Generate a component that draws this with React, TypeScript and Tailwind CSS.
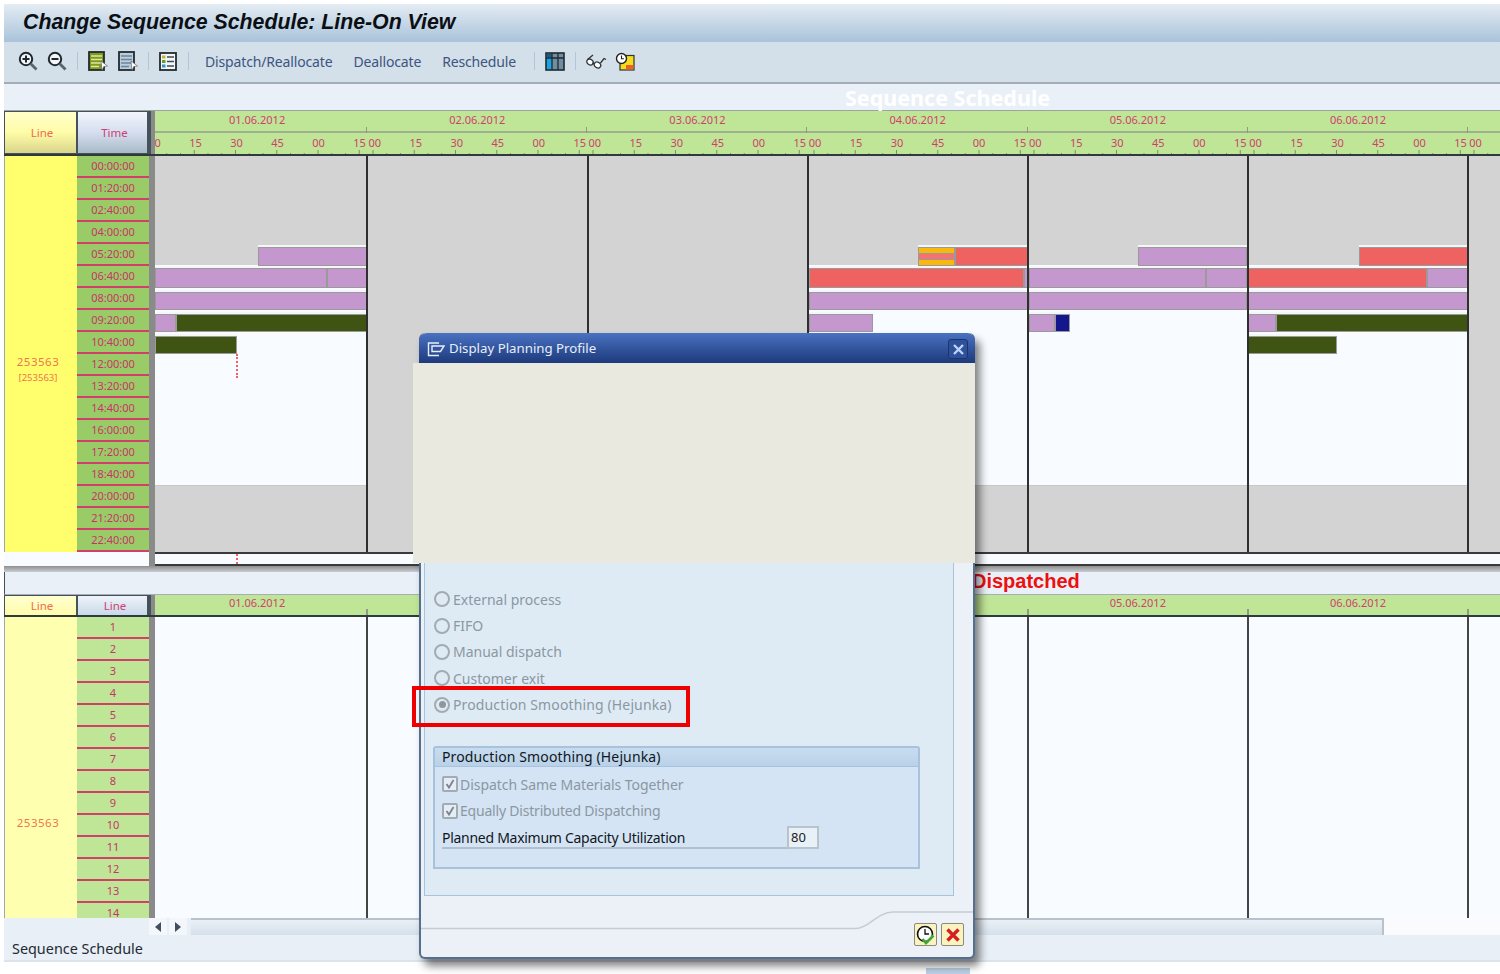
import React from 'react';

const uiFont = { fontFamily: '"Noto Sans", "Open Sans", sans-serif' };

const times = ['00:00:00','01:20:00','02:40:00','04:00:00','05:20:00','06:40:00','08:00:00','09:20:00','10:40:00','12:00:00','13:20:00','14:40:00','16:00:00','17:20:00','18:40:00','20:00:00','21:20:00','22:40:00'];
const days = ['01.06.2012','02.06.2012','03.06.2012','04.06.2012','05.06.2012','06.06.2012'];
const dayLines = [367, 588, 808, 1028, 1248, 1468];
const ticks = ['00','15','30','45','00','15'];

const PURPLE = '#c497cf';
const RED = '#ef6262';
const MOSS = '#3f5413';
const NAVY = '#14168e';

type Bar = { x1: number; x2: number; y: number; h: number; color: string };

const bar = (x1: number, x2: number, row: number, color: string): Bar => {
  const rows = [[247, 19], [268, 20], [292, 18], [314, 18], [336, 18]];
  return { x1, x2, y: rows[row][0], h: rows[row][1], color };
};

const bars: Bar[] = [
  bar(258, 367, 0, PURPLE), bar(955, 1028, 0, RED), bar(1138, 1247, 0, PURPLE), bar(1359, 1468, 0, RED),
  bar(155, 327, 1, PURPLE), bar(327, 367, 1, PURPLE), bar(809, 1024, 1, RED), bar(1024, 1028, 1, PURPLE),
  bar(1029, 1206, 1, PURPLE), bar(1206, 1247, 1, PURPLE), bar(1248, 1427, 1, RED), bar(1427, 1468, 1, PURPLE),
  bar(155, 367, 2, PURPLE), bar(809, 1028, 2, PURPLE), bar(1029, 1247, 2, PURPLE), bar(1248, 1468, 2, PURPLE),
  bar(155, 176, 3, PURPLE), bar(176, 367, 3, MOSS), bar(809, 873, 3, PURPLE), bar(1029, 1055, 3, PURPLE),
  bar(1055, 1070, 3, NAVY), bar(1248, 1276, 3, PURPLE), bar(1276, 1468, 3, MOSS),
  bar(155, 237, 4, MOSS), bar(1248, 1337, 4, MOSS),
];

// working-time areas are white, the rest of the canvas stays grey
const whiteAreas = [[155, 367], [809, 1028], [1029, 1248], [1248, 1468]];

const ZoomIcon = ({ plus }: { plus?: boolean }) => (
  <svg width="20" height="20" viewBox="0 0 20 20" fill="none" stroke="#1e282e">
    <circle cx="8" cy="8" r="6.200" strokeWidth="2" fill="#f4f7fa" />
    <path d="M12.500 12.500 L18.500 18.500" strokeWidth="2.800" stroke="#59646c" />
    <path d={plus ? 'M4.500 8h7M8 4.500v7' : 'M4.500 8h7'} strokeWidth="2" />
  </svg>
);

const SheetIcon = ({ green }: { green?: boolean }) => (
  <svg width="20" height="20" viewBox="0 0 20 20">
    <rect x="1" y="1" width="15" height="18" fill={green ? '#7f9a22' : '#b9cddd'} stroke="#232b2e" strokeWidth="1.800" />
    <path d="M3 5h11M3 8.500h11M3 12h11M3 15.500h8" stroke={green ? '#dfe89a' : '#6c8597'} strokeWidth="1.300" />
    <path d="M13 10 L19.500 15 L15.800 15.500 L14 19.500 Z" fill="#fff" stroke="#555" strokeWidth="0.600" />
  </svg>
);

const LayoutIcon = () => (
  <svg width="18" height="19" viewBox="0 0 18 19">
    <rect x="1" y="1" width="16" height="17" fill="#f3f6f8" stroke="#232b2e" strokeWidth="1.800" />
    <rect x="3" y="3.500" width="3.500" height="3" fill="#c9b32a" />
    <rect x="3" y="8" width="3.500" height="3" fill="#5aa03a" />
    <rect x="3" y="12.500" width="3.500" height="3" fill="#3a8fc9" />
    <path d="M8 5h7M8 9.500h7M8 14h7" stroke="#3d4a52" strokeWidth="1.300" />
  </svg>
);

const ColumnsIcon = () => (
  <svg width="20" height="19" viewBox="0 0 20 19">
    <rect x="1" y="1" width="18" height="17" fill="#6f8fa1" stroke="#1f2a30" strokeWidth="1.600" />
    <rect x="2" y="6" width="4.500" height="11" fill="#12a5e8" />
    <rect x="2" y="2" width="4.500" height="3" fill="#0b5f95" />
    <path d="M7 1v17M13 1v17M1 6h18" stroke="#1f2a30" strokeWidth="1.300" />
  </svg>
);

const GlassesIcon = () => (
  <svg width="22" height="16" viewBox="0 0 22 16" fill="#fff" stroke="#2c3538" strokeWidth="1.300">
    <ellipse cx="5" cy="9" rx="3.400" ry="2.800" transform="rotate(35 5 9)" />
    <ellipse cx="12.500" cy="12" rx="3.400" ry="2.800" transform="rotate(35 12.500 12)" />
    <path d="M7.500 10.500 L9.500 10.500 M2.500 6.500 L8 2 M15.500 10 L19 5.500 L21 6.500" fill="none" />
  </svg>
);

const ClockDocIcon = () => (
  <svg width="20" height="19" viewBox="0 0 20 19">
    <rect x="5" y="3.500" width="14" height="14.500" fill="#f5dc1e" stroke="#333" strokeWidth="1.200" />
    <rect x="11" y="13" width="7.500" height="4.500" fill="#e8622a" />
    <circle cx="6.500" cy="6.500" r="5" fill="#fff" stroke="#222" strokeWidth="1.400" />
    <path d="M6.500 3.500v3.200h2.400" stroke="#222" strokeWidth="1.100" fill="none" />
  </svg>
);

const Sep = () => <div className="w-px h-[18px] bg-[#b3c6d8]" />;

const RadioRow = ({ label, checked, spaced }: { label: string; checked?: boolean; spaced?: boolean }) => (
  <div className="flex items-center h-[26.4px]">
    <span className="w-4 h-4 rounded-full border-2 border-[#a3abb2] flex items-center justify-center">
      {checked && <span className="w-[7px] h-[7px] rounded-full bg-[#8f979e]" />}
    </span>
    <span className={`ml-[3px] text-[14px] text-[#8b97a2] whitespace-nowrap ${spaced ? 'tracking-[0.13px]' : ''}`}>{label}</span>
  </div>
);

const CheckRow = ({ label, tight }: { label: string; tight?: boolean }) => (
  <div className="flex items-center h-[26.500px]">
    <span className="w-4 h-4 rounded-[2px] border-2 border-[#a3abb2] bg-[#e4edf5] flex items-center justify-center">
      <svg width="12" height="12" viewBox="0 0 12 12" fill="none" stroke="#7b848c" strokeWidth="1.800"><path d="M2.500 6 L5 9.500 L9.500 2" /></svg>
    </span>
    <span className={`ml-[2px] text-[14px] text-[#8b97a2] whitespace-nowrap ${tight ? 'tracking-[-0.2px]' : 'tracking-[-0.05px]'}`}>{label}</span>
  </div>
);

const RulerTicks = () => (
  <svg width="220" height="6" className="block">
    {Array.from({ length: 16 }).map((_, i) => (
      <line key={i} x1={i * 13.75 + 6} x2={i * 13.75 + 6} y1={i % 3 === 0 ? 0 : 3} y2="6" stroke="#7f8f70" strokeWidth="1" />
    ))}
  </svg>
);

const DayHeader = ({ date }: { date: string }) => (
  <div className="w-[220.2px] shrink-0 relative">
    <div className="h-[22px] border-b-2 border-[#9fb08c] text-center text-[11px] leading-[17px] text-[#cf3f70]">{date}</div>
    <div className="flex h-[17px] -ml-[13px] text-[11px] leading-[19px] text-[#cf3f70]">
      {ticks.map((t, i) => (
        <span key={i} className="w-[41px] shrink-0 text-center">{t}</span>
      ))}
    </div>
    <RulerTicks />
    <div className="absolute left-[219px] top-[16px] w-px h-[6px] bg-[#8f9a80]" />
  </div>
);

const DottedRed = ({ h }: { h: number }) => (
  <div className="w-[2px] border-l-2 border-dotted border-[#f45f62]" style={{ height: h }} />
);

const Gantt = () => (
  <div className="relative h-[396px] overflow-hidden bg-[#d3d3d3]">
    {whiteAreas.map(([a, b]) => (
      <div key={a} className="absolute top-[109px] h-[221px] bg-[#f8fbff] border-b border-[#c8c8c8]" style={{ left: a - 155, width: b - a }} />
    ))}
    {bars.map((b, i) => (
      <div
        key={i}
        className="absolute border border-[#9a9a9a] shadow-[0_-2px_0_#f4f6f8]"
        style={{ left: b.x1 - 155, width: b.x2 - b.x1, top: b.y - 156, height: b.h, background: b.color }}
      />
    ))}
    <div className="absolute left-[763px] top-[91px] w-[37px] h-[19px] border border-[#9a9a9a] shadow-[0_-2px_0_#f4f6f8] flex flex-col">
      <div className="h-[5px] bg-[#f9b90c]" />
      <div className="flex-1 bg-[#f47272] border-y border-[#9a9a9a]" />
      <div className="h-[5px] bg-[#f9b90c]" />
    </div>
    <div className="absolute left-[81px] top-[198px]"><DottedRed h={24} /></div>
    {dayLines.map((x) => (
      <div key={x} className="absolute top-0 bottom-0 w-[2px] bg-[#2f2f2f]" style={{ left: x - 156 }} />
    ))}
  </div>
);

const LowerCanvas = () => (
  <div className="relative h-full bg-[#f8fbff]">
    {dayLines.map((x) => (
      <div key={x} className="absolute top-0 bottom-0 w-[2px] bg-[#444]" style={{ left: x - 156 }} />
    ))}
  </div>
);

export default function App() {
  return (
    <div className="relative w-[1500px] h-[974px] overflow-hidden bg-white" style={uiFont}>
      <div className="ml-[4px] pt-[4px]">
        {/* title */}
        <div className="h-[38px] flex items-center pl-[19px] bg-gradient-to-b from-[#e4ecf3] to-[#a9c3da]">
          <span className="text-[21.300px] font-bold italic text-[#0b0f14] whitespace-nowrap" style={{ fontFamily: '"Liberation Sans", sans-serif' }}>
            Change Sequence Schedule: Line-On View
          </span>
        </div>

        {/* toolbar */}
        <div className="h-[42px] flex items-center bg-[#d3dfe9] border-b-2 border-[#a4adb6] pl-[14px] pb-[2px] text-[14px] tracking-[-0.15px] text-[#3d5580]">
          <ZoomIcon plus />
          <div className="ml-[9px]"><ZoomIcon /></div>
          <div className="ml-[10px]"><Sep /></div>
          <div className="ml-[10px]"><SheetIcon green /></div>
          <div className="ml-[10px]"><SheetIcon /></div>
          <div className="ml-[10px]"><Sep /></div>
          <div className="ml-[10px]"><LayoutIcon /></div>
          <div className="ml-[11px]"><Sep /></div>
          <span className="ml-[16px] whitespace-nowrap">Dispatch/Reallocate</span>
          <span className="ml-[21px]">Deallocate</span>
          <span className="ml-[21px]">Reschedule</span>
          <div className="ml-[18px]"><Sep /></div>
          <div className="ml-[10px]"><ColumnsIcon /></div>
          <div className="ml-[10px]"><Sep /></div>
          <div className="ml-[9px]"><GlassesIcon /></div>
          <div className="ml-[8px]"><ClockDocIcon /></div>
        </div>

        {/* upper title band */}
        <div className="h-[27px] bg-[#e9f0f8] pl-[841px] border-b border-[#9aa5a0]">
          <span className="text-[21.500px] leading-[27px] font-bold text-white whitespace-nowrap">Sequence Schedule</span>
        </div>

        {/* upper header */}
        <div className="flex h-[45px] border-b-2 border-[#2f3a3c]">
          <div className="w-[145px] flex gap-[2px] pl-px pt-px pb-px bg-[#44525a]">
            <div className="w-[71px] flex items-center justify-center pl-[3px] bg-gradient-to-b from-[#ffffc8] via-[#fffca8] to-[#d9d68c] text-[11.500px] text-[#f26a50]">Line</div>
            <div className="w-[69px] flex items-center justify-center pl-[4px] bg-gradient-to-b from-[#f3f6fc] via-[#d5def0] to-[#a9bac8] text-[11.500px] text-[#cf3f70]">Time</div>
          </div>
          <div className="w-[6px] bg-[#8a8a8a] border-l-2 border-[#44525a]" />
          <div className="flex-1 overflow-hidden bg-[#bfe596]">
            <div className="flex -ml-[8px]">
              {days.map((d) => <DayHeader key={d} date={d} />)}
              <DayHeader date="" />
            </div>
          </div>
        </div>

        {/* upper body */}
        <div className="flex h-[396px]">
          <div className="w-[73px] bg-[#ffff6e] border-l border-[#9aa] pl-[4px] pt-[198px] text-[#f0764f]">
            <div className="w-[58px] text-center text-[11.500px] leading-[15px] tracking-[0.5px]">253563</div>
            <div className="w-[58px] text-center text-[9.500px] leading-[17px]">[253563]</div>
          </div>
          <div className="w-[72px]">
            {times.map((t) => (
              <div key={t} className="h-[22px] flex items-center justify-center bg-[#99cc66] border-b-2 border-[#d0406a] text-[11px] text-[#c9336c]">{t}</div>
            ))}
          </div>
          <div className="w-[6px] bg-[#8a8a8a]" />
          <div className="flex-1"><Gantt /></div>
        </div>

        {/* strip under upper body */}
        <div className="flex h-[14px] bg-[#f8fbff]">
          <div className="w-[145px]" />
          <div className="w-[6px] bg-[#8a8a8a]" />
          <div className="flex-1 border-y-2 border-[#3a3a3a] pl-[81px]"><DottedRed h={10} /></div>
        </div>

        <div className="h-[6px] bg-gradient-to-b from-[#8f8f8f] to-[#c9ced2]" />

        {/* lower title band */}
        <div className="h-[23px] bg-[#e9f0f8] border-b border-[#a8aeb5] border-l border-l-[#44525a] pl-[967px]">
          <span className="text-[20px] leading-[19px] font-bold text-[#ee0f0f] block" style={{ fontFamily: '"Liberation Sans", sans-serif' }}>Dispatched</span>
        </div>

        {/* lower header */}
        <div className="flex h-[22px] border-b-2 border-[#2f3a3c]">
          <div className="w-[145px] flex gap-[2px] bg-[#44525a] pl-px pt-px">
            <div className="w-[71px] flex items-center justify-center pl-[3px] bg-gradient-to-b from-[#ffffd0] to-[#fffcaa] text-[11.500px] text-[#f26a50]">Line</div>
            <div className="w-[69px] flex items-center justify-center pl-[5px] bg-gradient-to-b from-[#eef3fa] to-[#c9d9ea] text-[11.500px] text-[#cf3f70]">Line</div>
          </div>
          <div className="w-[6px] bg-[#8a8a8a] border-l-2 border-[#44525a]" />
          <div className="flex-1 overflow-hidden bg-[#bfe596]">
            <div className="flex -ml-[8px]">
              {days.map((d) => (
                <div key={d} className="w-[220.2px] shrink-0 relative text-center text-[11px] leading-[16px] text-[#cf3f70]">
                  {d}
                  <div className="absolute left-[219px] top-[14px] w-[2px] h-[6px] bg-[#8f9a80]" />
                </div>
              ))}
            </div>
          </div>
        </div>

        {/* lower body */}
        <div className="flex h-[301px] overflow-hidden">
          <div className="w-[73px] bg-[#ffffb0] border-l border-[#9aa] pl-[4px] pt-[198px] text-[#f0764f]">
            <div className="w-[58px] text-center text-[11.500px] leading-[15px] tracking-[0.5px]">253563</div>
          </div>
          <div className="w-[72px]">
            {Array.from({ length: 14 }).map((_, i) => (
              <div key={i} className="h-[22px] flex items-center justify-center bg-[#bfe596] border-b-2 border-[#d0406a] text-[11px] text-[#c9336c]">{i + 1}</div>
            ))}
          </div>
          <div className="w-[6px] bg-[#8a8a8a]" />
          <div className="flex-1"><LowerCanvas /></div>
        </div>

        {/* scroll bar */}
        <div className="flex h-[17px] bg-[#e8eff6]">
          <div className="w-[145px]" />
          <div className="w-[18px] bg-[#f3f6fa] flex items-center justify-center">
            <div className="w-0 h-0 border-y-[5px] border-y-transparent border-r-[6px] border-r-[#40505c]" />
          </div>
          <div className="w-[2px]" />
          <div className="w-[18px] bg-[#f3f6fa] flex items-center justify-center">
            <div className="w-0 h-0 border-y-[5px] border-y-transparent border-l-[6px] border-l-[#40505c]" />
          </div>
          <div className="w-[4px]" />
          <div className="w-[1193px] bg-gradient-to-b from-[#eaf0f5] to-[#d5e0ea] border-t-2 border-r-2 border-[#b8c2cc]" />
          <div className="flex-1 bg-[#fbfbfd]" />
        </div>

        {/* status bar */}
        <div className="h-[27px] bg-[#e8eff6] border-b-2 border-[#dde3ec] pl-[8px] text-[14.400px] leading-[27px] text-[#1f2a33]">Sequence Schedule</div>
      </div>

      {/* popup */}
      <div className="absolute left-[419px] top-[333px] w-[556px] h-[626px] z-10 flex flex-col rounded-[6px] border-2 border-t-0 border-[#55708f] bg-[#ebf1f7] shadow-[5px_7px_9px_rgba(0,0,0,0.5)]">
        <div className="h-[30px] -mx-[2px] shrink-0 flex items-center pl-[8px] pr-[7px] pt-[2px] rounded-t-[8px] bg-gradient-to-b from-[#4a72c2] to-[#1e3a7c] text-[13.250px] text-[#e6eefa]">
          <svg width="18" height="15" viewBox="0 0 18 15" fill="none" stroke="#e6eefa" strokeWidth="1.400">
            <path d="M12 1H1.500v12.500H12" />
            <path d="M17 4H5v5.500h8.500L17 4z" />
          </svg>
          <span className="ml-[4px]">Display Planning Profile</span>
          <div className="ml-auto w-[20px] h-[20px] rounded-[3px] bg-[#2f519a] border border-[#1b3470] flex items-center justify-center">
            <svg width="13" height="13" viewBox="0 0 13 13" stroke="#bcd4fa" strokeWidth="2.400"><path d="M2 2l9 9M11 2l-9 9" /></svg>
          </div>
        </div>
        {/* flat block covering the upper part of the form */}
        <div className="h-[200px] shrink-0 -ml-[8px] -mr-[2px] bg-[#e9e9e0]" />

        <div className="mx-[3px] h-[333px] shrink-0 bg-[#deebf5] border border-t-0 border-[#a8c3dc] pl-[9px] pt-[23px] w-[530px]">
          <RadioRow label="External process" />
          <RadioRow label="FIFO" />
          <RadioRow label="Manual dispatch" />
          <RadioRow label="Customer exit" />
          <RadioRow label="Production Smoothing (Hejunka)" checked spaced />

          <div className="mt-[28px] -ml-px w-[487px] h-[123px] border-2 border-[#a9c2dc] rounded-t-[3px] bg-[#d4e4f4]">
            <div className="h-[19px] bg-gradient-to-b from-[#c8dcef] to-[#b9d2e9] border-b border-[#a9c2dc] pl-[7px] tracking-[0.13px] text-[14px] leading-[18px] text-[#10161c]">Production Smoothing (Hejunka)</div>
            <div className="pl-[7px] pt-[4px]">
              <CheckRow label="Dispatch Same Materials Together" />
              <CheckRow label="Equally Distributed Dispatching" tight />
              <div className="flex h-[23px] items-end mt-[2px]">
                <div className="w-[345px] h-[23px] border-b-2 border-[#b3c0cc] text-[14px] tracking-[-0.28px] leading-[24px] text-[#10161c]">Planned Maximum Capacity Utilization</div>
                <div className="w-[32px] h-[23px] border-2 border-[#b9c3cc] bg-[#e9f1f8] pl-[2px] text-[13px] leading-[19px] text-[#222]">80</div>
              </div>
            </div>
          </div>
        </div>

        {/* footer */}
        <div className="relative flex-1">
          <svg className="absolute left-0 top-[14px]" width="552" height="20" fill="none" stroke="#c3ccd6" strokeWidth="1.500">
            <path d="M0 18.500H435C448 18.500 456 2 472 2H552" />
          </svg>
          <div className="absolute right-[9px] top-[27px] flex gap-[4px]">
            <div className="w-[23px] h-[23px] rounded-[2px] bg-[#fbf3bf] border border-[#8b8b78] flex items-center justify-center">
              <svg width="20" height="20" viewBox="0 0 20 20" fill="none">
                <circle cx="9" cy="9" r="7.500" fill="#fff" stroke="#111" strokeWidth="1.600" />
                <path d="M9 4v5h4" stroke="#111" strokeWidth="1.300" />
                <path d="M6.500 14l3.500 4 7.500-7.500" stroke="#3fa535" strokeWidth="2.600" />
              </svg>
            </div>
            <div className="w-[23px] h-[23px] rounded-[2px] bg-[#fbf3bf] border border-[#8b8b78] flex items-center justify-center">
              <svg width="16" height="16" viewBox="0 0 16 16" stroke="#d42020" strokeWidth="3.400"><path d="M2.500 2.500l11 11M13.500 2.500l-11 11" /></svg>
            </div>
          </div>
        </div>
      </div>

      {/* red highlight */}
      <div className="absolute left-[412px] top-[686px] w-[278px] h-[41px] z-20 border-[4px] border-[#ee0000]" />

      <div className="absolute left-[926px] top-[968px] w-[44px] h-[6px] bg-[#bcd0e6]" />
    </div>
  );
}
